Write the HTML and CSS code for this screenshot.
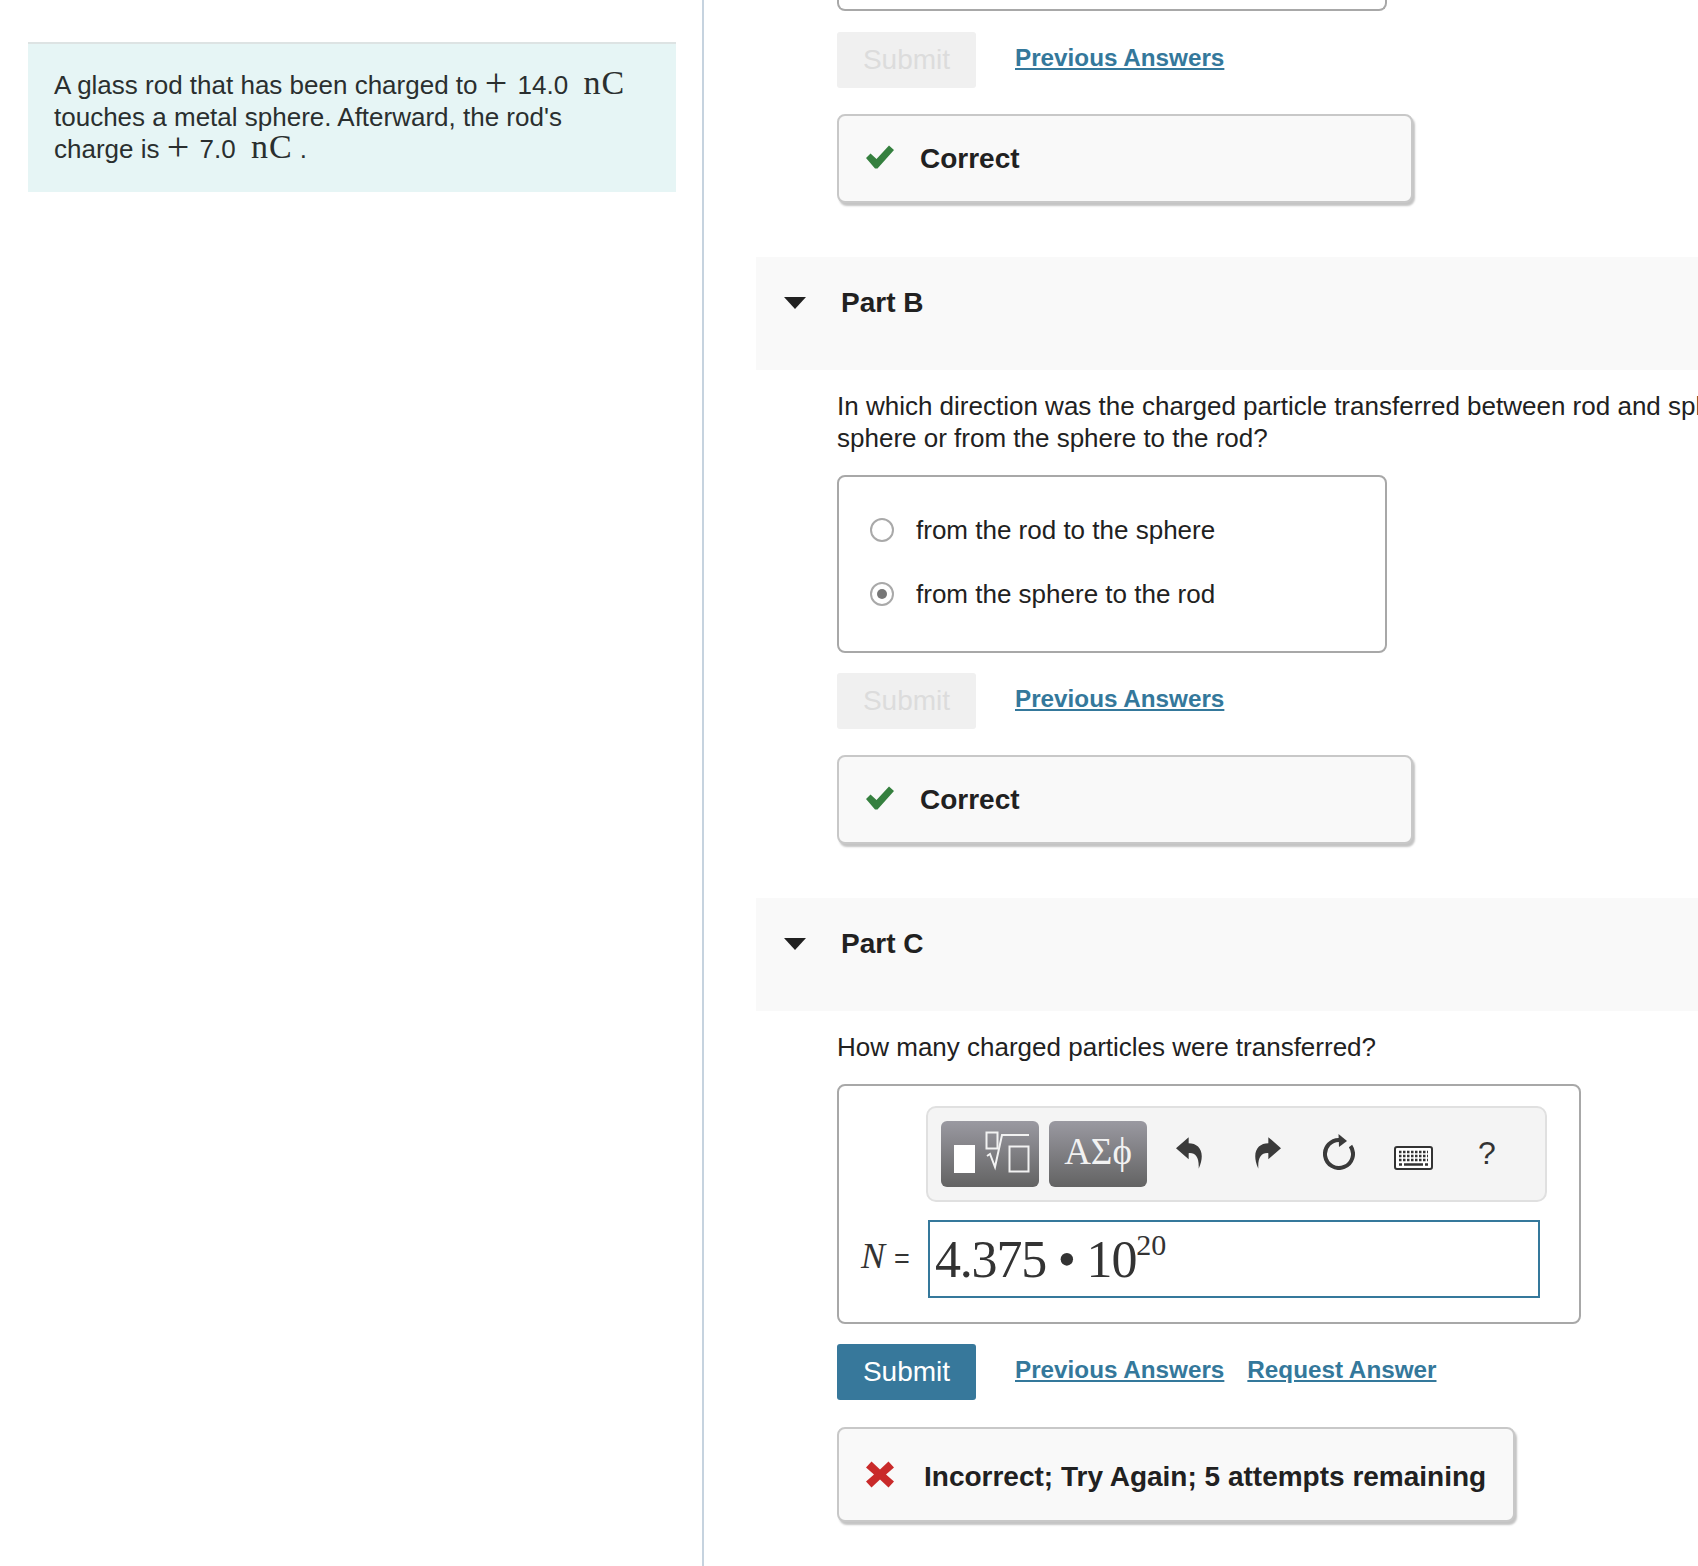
FILE: index.html
```html
<!DOCTYPE html>
<html lang="en">
<head>
    <meta charset="UTF-8">
    <meta name="viewport" content="width=device-width, initial-scale=1.0">
    <title>Item</title>
    <link rel="stylesheet" href="styles.css">
</head>
<body>

<div id="page">
    <div id="left">
        <div class="intro">
            A glass rod that has been charged to <span class="op">+</span> 14.0 <span class="unit">nC</span><br>
            touches a metal sphere. Afterward, the rod's<br>
            charge is <span class="op">+</span> 7.0 <span class="unit">nC</span> .
        </div>
    </div>

    <div id="right">
        <div class="part-body first">
            <div class="box stub"></div>
            <div class="actions">
                <button class="submit" disabled>Submit</button>
                <a class="link first-link" href="#">Previous Answers</a>
            </div>
            <div class="feedback">
                <svg class="check" viewBox="0 0 28 24"><path d="M0 13L4.500 8.500L10.500 14L23 0.500L28 5L11.500 23.500L9 23.500Z"/></svg>
                <span class="feedback-text">Correct</span>
            </div>
        </div>

        <div class="part-head">
            <span class="caret"></span>
            <span class="part-title">Part B</span>
        </div>
        <div class="part-body">
            <p class="question">In which direction was the charged particle transferred between rod and sphere: from the rod to the<br>sphere or from the sphere to the rod?</p>
            <div class="box choices">
                <div class="choice"><span class="radio"></span>from the rod to the sphere</div>
                <div class="choice"><span class="radio on"></span>from the sphere to the rod</div>
            </div>
            <div class="actions after-choices">
                <button class="submit" disabled>Submit</button>
                <a class="link first-link" href="#">Previous Answers</a>
            </div>
            <div class="feedback">
                <svg class="check" viewBox="0 0 28 24"><path d="M0 13L4.500 8.500L10.500 14L23 0.500L28 5L11.500 23.500L9 23.500Z"/></svg>
                <span class="feedback-text">Correct</span>
            </div>
        </div>

        <div class="part-head">
            <span class="caret"></span>
            <span class="part-title">Part C</span>
        </div>
        <div class="part-body">
            <p class="question">How many charged particles were transferred?</p>
            <div class="box answer">
                <div class="toolbar">
                    <div class="tool-btn">
                        <svg width="98" height="66" viewBox="0 0 98 66">
                            <rect x="13" y="24" width="21" height="28" fill="#fff"/>
                            <rect x="45.500" y="11.500" width="11" height="16" fill="none" stroke="#f2f2f2" stroke-width="2"/>
                            <path d="M46 35l3-2 5 13 7-32h27" fill="none" stroke="#f2f2f2" stroke-width="2"/>
                            <rect x="68.500" y="25.500" width="19" height="25" fill="none" stroke="#f2f2f2" stroke-width="2"/>
                        </svg>
                    </div>
                    <div class="tool-btn greek">ΑΣϕ</div>
                    <svg class="tool-icon undo" viewBox="0 0 84 95"><path d="M0 33L38 0V18C70 18 90 45 68 95C70 60 58 46 38 48V66Z"/></svg>
                    <svg class="tool-icon redo" viewBox="0 0 84 95"><path d="M84 33L46 0V18C14 18 -6 45 16 95C14 60 26 46 46 48V66Z"/></svg>
                    <svg class="tool-icon reset" viewBox="0 0 32 36">
                        <path d="M17 6A14 14 0 1 0 27.500 12" fill="none" stroke="#3a3a3a" stroke-width="4"/>
                        <path d="M15.500 0L24 7L16 13Z" fill="#3a3a3a"/>
                    </svg>
                    <svg class="tool-icon keys" viewBox="0 0 39 24">
                        <rect x="1" y="1" width="37" height="22" rx="2" fill="#fff" stroke="#333" stroke-width="2"/>
                        <path d="M5 6h29M5 10h29M5 14h29" stroke="#333" stroke-width="2.500" stroke-dasharray="2.500 1.500" fill="none"/>
                        <path d="M5 18.500h3M10 18.500h19M31 18.500h3" stroke="#333" stroke-width="2.500" fill="none"/>
                    </svg>
                    <span class="help">?</span>
                </div>
                <div class="entry">
                    <span class="entry-label"><i>N</i> <span class="eq">=</span></span>
                    <div class="entry-input">4.375 • 10<sup>20</sup></div>
                </div>
            </div>
            <div class="actions last">
                <button class="submit active">Submit</button>
                <a class="link first-link" href="#">Previous Answers</a>
                <a class="link" href="#">Request Answer</a>
            </div>
            <div class="feedback wrong">
                <svg class="cross" viewBox="0 0 28 27"><path d="M0 6.500L5.500 0.500L14 8.500L22.500 0.500L28 6.500L20 13.500L28 20.500L22.500 26.500L14 18.500L5.500 26.500L0 20.500L8 13.500Z"/></svg>
                <span class="feedback-text">Incorrect; Try Again; 5 attempts remaining</span>
            </div>
        </div>
    </div>
</div>

</body>
</html>
```

FILE: styles.css
```css
body {
    margin: 0;
    background-color: #fff;
    color: #212121;
    font-family: 'Liberation Sans', Arial, sans-serif;
    font-size: 26px;
}

#page {
    display: flex;
    width: 1698px;
    height: 1566px;
    overflow: hidden;
}

/* left column */
#left {
    box-sizing: border-box;
    flex: none;
    width: 704px;
    padding: 42px 26px 0 28px;
    border-right: 2px solid #c6d3df;
}

.intro {
    box-sizing: border-box;
    height: 150px;
    padding: 25px 26px 0;
    border-top: 2px solid #dde3e3;
    background-color: #e6f5f5;
    font-size: 26px;
    line-height: 32px;
    color: #2a2f2f;
}

.op {
    margin-right: 3px;
    font-family: 'Liberation Serif', serif;
    font-size: 40px;
    line-height: 20px;
    vertical-align: -2px;
}

.unit {
    margin-left: 8px;
    font-family: 'Liberation Serif', serif;
    font-size: 34px;
    letter-spacing: 1px;
    line-height: 20px;
}

/* right column */
#right {
    flex: none;
    width: 942px;
    margin-left: 52px;
}

.part-body {
    padding-left: 81px;
}

.part-head {
    display: flex;
    align-items: flex-start;
    box-sizing: border-box;
    height: 113px;
    margin-top: 54px;
    padding: 28px 0 0 28px;
    background-color: #f9f9f9;
}

.caret {
    flex: none;
    width: 0;
    height: 0;
    margin-top: 12px;
    border-top: 12px solid #212121;
    border-left: 11px solid transparent;
    border-right: 11px solid transparent;
}

.part-title {
    margin-left: 35px;
    font-size: 28px;
    font-weight: bold;
    line-height: 36px;
}

.question {
    width: 900px;
    margin: 20px 0 0;
    font-size: 26px;
    line-height: 32px;
    white-space: nowrap;
}

.box {
    box-sizing: border-box;
    border: 2px solid #a8a8a8;
    border-radius: 8px;
    background-color: #fff;
}

.stub {
    width: 550px;
    height: 11px;
    border-top: none;
    border-top-left-radius: 0;
    border-top-right-radius: 0;
}

.choices {
    width: 550px;
    height: 178px;
    margin-top: 21px;
    padding: 37px 0 0 31px;
}

.choice {
    display: flex;
    align-items: center;
    height: 32px;
    margin-bottom: 32px;
    font-size: 26px;
    white-space: nowrap;
}

.radio {
    box-sizing: border-box;
    flex: none;
    display: flex;
    align-items: center;
    justify-content: center;
    width: 24px;
    height: 24px;
    margin-right: 22px;
    border: 2px solid #a9a9a9;
    border-radius: 50%;
    background-color: #fff;
}

.radio.on::after {
    content: "";
    width: 10px;
    height: 10px;
    border-radius: 50%;
    background-color: #777;
}

.actions {
    display: flex;
    align-items: flex-start;
    margin-top: 21px;
}

.actions.after-choices,
.actions.last {
    margin-top: 20px;
}

.submit {
    flex: none;
    width: 139px;
    height: 56px;
    padding: 0;
    border: none;
    border-radius: 3px;
    font-family: inherit;
    font-size: 28px;
}

.submit:disabled {
    background-color: #f0f0f0;
    color: #dcdcdc;
}

.submit.active {
    background-color: #37789b;
    color: #fff;
}

.link {
    margin-left: 23px;
    color: #34789b;
    font-size: 24.25px;
    font-weight: bold;
    line-height: 52px;
}

.first-link {
    margin-left: 39px;
}

.feedback {
    display: flex;
    align-items: center;
    box-sizing: border-box;
    width: 576px;
    height: 89px;
    margin-top: 26px;
    padding: 0 0 0 27px;
    border: 2px solid #c8c8c8;
    border-radius: 8px;
    background-color: #f9f9f9;
    box-shadow: 2px 3px 2px #c4c4c4;
}

.feedback.wrong {
    width: 678px;
    height: 95px;
    margin-top: 27px;
}

.feedback.wrong .feedback-text {
    padding-top: 5px;
}

.check {
    flex: none;
    width: 28px;
    height: 24px;
    margin-right: 26px;
    margin-top: -4px;
    fill: #35803f;
}

.cross {
    flex: none;
    width: 28px;
    height: 27px;
    margin-right: 30px;
    margin-top: -1px;
    fill: #c92a2a;
}

.feedback-text {
    font-size: 28px;
    font-weight: bold;
    white-space: nowrap;
}

/* math answer box */
.answer {
    width: 744px;
    height: 240px;
    margin-top: 21px;
    padding: 20px 0 0 87px;
}

.toolbar {
    display: flex;
    align-items: center;
    box-sizing: border-box;
    width: 621px;
    height: 96px;
    padding: 0 0 0 13px;
    border: 2px solid #e0e0e0;
    border-radius: 10px;
    background-color: #f4f4f4;
}

.tool-btn {
    flex: none;
    display: flex;
    align-items: center;
    justify-content: center;
    box-sizing: border-box;
    width: 98px;
    height: 66px;
    margin-right: 10px;
    border-radius: 6px;
    background: linear-gradient(#9a99a1, #636363);
}

.greek {
    margin-right: 0;
    padding-bottom: 6px;
    font-family: 'Liberation Serif', serif;
    font-size: 37px;
    color: #f2f2f2;
}

.tool-icon {
    flex: none;
    fill: #3a3a3a;
}

.undo {
    width: 28px;
    height: 32px;
    margin-left: 29px;
    margin-top: -2px;
}

.redo {
    width: 28px;
    height: 32px;
    margin-left: 49px;
    margin-top: -2px;
}

.reset {
    width: 32px;
    height: 36px;
    margin-left: 42px;
    margin-top: -4px;
}

.keys {
    width: 39px;
    height: 24px;
    margin-left: 39px;
    margin-top: 8px;
}

.help {
    margin-left: 45px;
    margin-top: -2px;
    font-size: 32px;
    color: #333;
}

.entry {
    display: flex;
    align-items: center;
    margin-top: 18px;
    margin-left: -66px;
}

.entry-label {
    box-sizing: border-box;
    flex: none;
    width: 68px;
    margin-top: -6px;
    padding-left: 1px;
    font-family: 'Liberation Serif', serif;
    font-size: 36px;
    color: #333;
}

.eq {
    font-family: 'Liberation Sans', sans-serif;
    font-size: 27px;
}

.entry-input {
    box-sizing: border-box;
    width: 612px;
    height: 78px;
    padding-left: 5px;
    border: 2px solid #35789b;
    font-family: 'Liberation Serif', serif;
    font-size: 52px;
    letter-spacing: -1.200px;
    line-height: 75px;
    color: #333;
}

.entry-input sup {
    font-size: 30px;
    letter-spacing: 0;
    line-height: 0;
    vertical-align: 22px;
}
```
